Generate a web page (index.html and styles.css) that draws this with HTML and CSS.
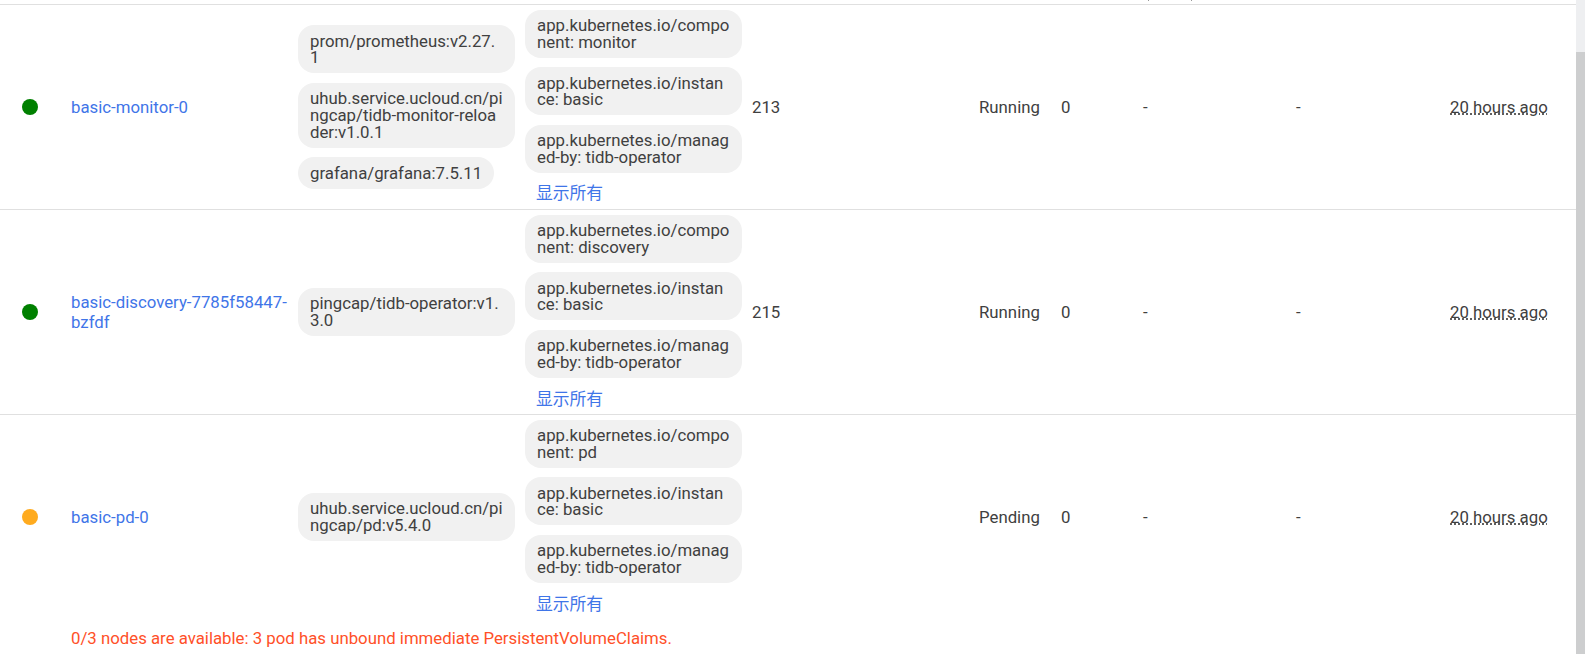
FILE: index.html
```html
<!DOCTYPE html>
<html lang="en">
<head>
    <meta charset="UTF-8">
    <meta name="viewport" content="width=device-width, initial-scale=1.0">
    <title>Pods</title>
    <link rel="stylesheet" href="styles.css">
</head>
<body>
    <div class="page">
        <div class="content">
            <!-- bottom of the row scrolled out of view -->
            <div class="prev-row"><span></span><span></span></div>
            <table class="pods">
                <colgroup>
                    <col class="col-status">
                    <col class="col-name">
                    <col class="col-images">
                    <col class="col-labels">
                    <col class="col-node">
                    <col class="col-phase">
                    <col class="col-restarts">
                    <col class="col-cpu">
                    <col class="col-memory">
                    <col class="col-created">
                </colgroup>
                <tbody>
                    <tr>
                        <td class="status-cell"><span class="dot dot-running"></span></td>
                        <td><a class="link" href="#">basic-monitor-0</a></td>
                        <td>
                            <div class="chips">
                                <span class="chip">prom/prometheus:v2.27.1</span>
                                <span class="chip">uhub.service.ucloud.cn/pingcap/tidb-monitor-reloader:v1.0.1</span>
                                <span class="chip">grafana/grafana:7.5.11</span>
                            </div>
                        </td>
                        <td>
                            <div class="chips chips-labels">
                                <span class="chip">app.kubernetes.io/component: monitor</span>
                                <span class="chip">app.kubernetes.io/instance: basic</span>
                                <span class="chip">app.kubernetes.io/managed-by: tidb-operator</span>
                                <a class="link show-all" href="#">显示所有</a>
                            </div>
                        </td>
                        <td>213</td>
                        <td>Running</td>
                        <td>0</td>
                        <td>-</td>
                        <td>-</td>
                        <td><span class="age">20 hours ago</span></td>
                    </tr>
                    <tr>
                        <td class="status-cell"><span class="dot dot-running"></span></td>
                        <td><a class="link" href="#">basic-discovery-7785f58447-bzfdf</a></td>
                        <td>
                            <div class="chips">
                                <span class="chip">pingcap/tidb-operator:v1.3.0</span>
                            </div>
                        </td>
                        <td>
                            <div class="chips chips-labels">
                                <span class="chip">app.kubernetes.io/component: discovery</span>
                                <span class="chip">app.kubernetes.io/instance: basic</span>
                                <span class="chip">app.kubernetes.io/managed-by: tidb-operator</span>
                                <a class="link show-all" href="#">显示所有</a>
                            </div>
                        </td>
                        <td>215</td>
                        <td>Running</td>
                        <td>0</td>
                        <td>-</td>
                        <td>-</td>
                        <td><span class="age">20 hours ago</span></td>
                    </tr>
                    <tr class="has-message">
                        <td class="status-cell"><span class="dot dot-pending"></span></td>
                        <td><a class="link" href="#">basic-pd-0</a></td>
                        <td>
                            <div class="chips">
                                <span class="chip">uhub.service.ucloud.cn/pingcap/pd:v5.4.0</span>
                            </div>
                        </td>
                        <td>
                            <div class="chips chips-labels">
                                <span class="chip">app.kubernetes.io/component: pd</span>
                                <span class="chip">app.kubernetes.io/instance: basic</span>
                                <span class="chip">app.kubernetes.io/managed-by: tidb-operator</span>
                                <a class="link show-all" href="#">显示所有</a>
                            </div>
                        </td>
                        <td></td>
                        <td>Pending</td>
                        <td>0</td>
                        <td>-</td>
                        <td>-</td>
                        <td><span class="age">20 hours ago</span></td>
                    </tr>
                    <tr class="message-row">
                        <td></td>
                        <td colspan="9">0/3 nodes are available: 3 pod has unbound immediate PersistentVolumeClaims.</td>
                    </tr>
                </tbody>
            </table>
        </div>
        <div class="scrollbar"><div class="scrollbar-thumb"></div></div>
    </div>
</body>
</html>
```

FILE: styles.css
```css
/* General Styles */
html, body {
    margin: 0;
    height: 100%;
}

body {
    font-family: 'Roboto', 'Noto Sans CJK SC', sans-serif;
    font-size: 16.8px;
    color: #404040;
    background-color: #fff;
    overflow: hidden;
}

.page {
    display: flex;
    height: 654px;
}

.content {
    flex: 1;
    min-width: 0;
    overflow: hidden;
}

/* Descender marks from the row above */
.prev-row {
    display: flex;
    gap: 42px;
    height: 4px;
    padding-left: 1148px;
}

.prev-row span {
    width: 1px;
    height: 1px;
    background-color: #999;
}

/* Table */
.pods {
    width: 1576px;
    table-layout: fixed;
    border-collapse: collapse;
}

.col-status { width: 66px; }
.col-name { width: 227px; }
.col-images { width: 227px; }
.col-labels { width: 227px; }
.col-node { width: 227px; }
.col-phase { width: 82px; }
.col-restarts { width: 82px; }
.col-cpu { width: 153px; }
.col-memory { width: 154px; }
.col-created { width: 131px; }

.pods tr {
    border-top: 1px solid #e0e0e0;
}

.pods tr.message-row {
    border-top: none;
}

.pods td {
    padding: 5px;
    line-height: 1.2;
    vertical-align: middle;
}

.pods td.status-cell {
    padding-left: 22px;
}

.dot {
    display: block;
    width: 16px;
    height: 16px;
    border-radius: 50%;
}

.dot-running {
    background-color: #008000;
}

.dot-pending {
    background-color: #ffab1f;
}

.link {
    color: #3f75e8;
    text-decoration: none;
}

/* Chips */
.chips {
    display: flex;
    flex-direction: column;
    align-items: flex-start;
    gap: 9.6px;
}

.chips-labels {
    gap: 9.4px;
}

.chip {
    box-sizing: border-box;
    max-width: 217px;
    padding: 7.2px 12px;
    border-radius: 16px;
    background-color: #f1f1f1;
    line-height: 1;
    word-break: break-all;
}

.show-all {
    margin: 3.4px 0 2.6px 11px;
    line-height: 16px;
}

.age {
    text-decoration: underline dotted;
    text-underline-offset: 1px;
}

.message-row td {
    padding-top: 9px;
    color: #ff5028;
}

/* Scrollbar */
.scrollbar {
    flex: none;
    width: 9px;
    padding-top: 52px;
    background-color: #eeeff1;
}

.scrollbar-thumb {
    height: 602px;
    background-color: #cdcecf;
}
```
